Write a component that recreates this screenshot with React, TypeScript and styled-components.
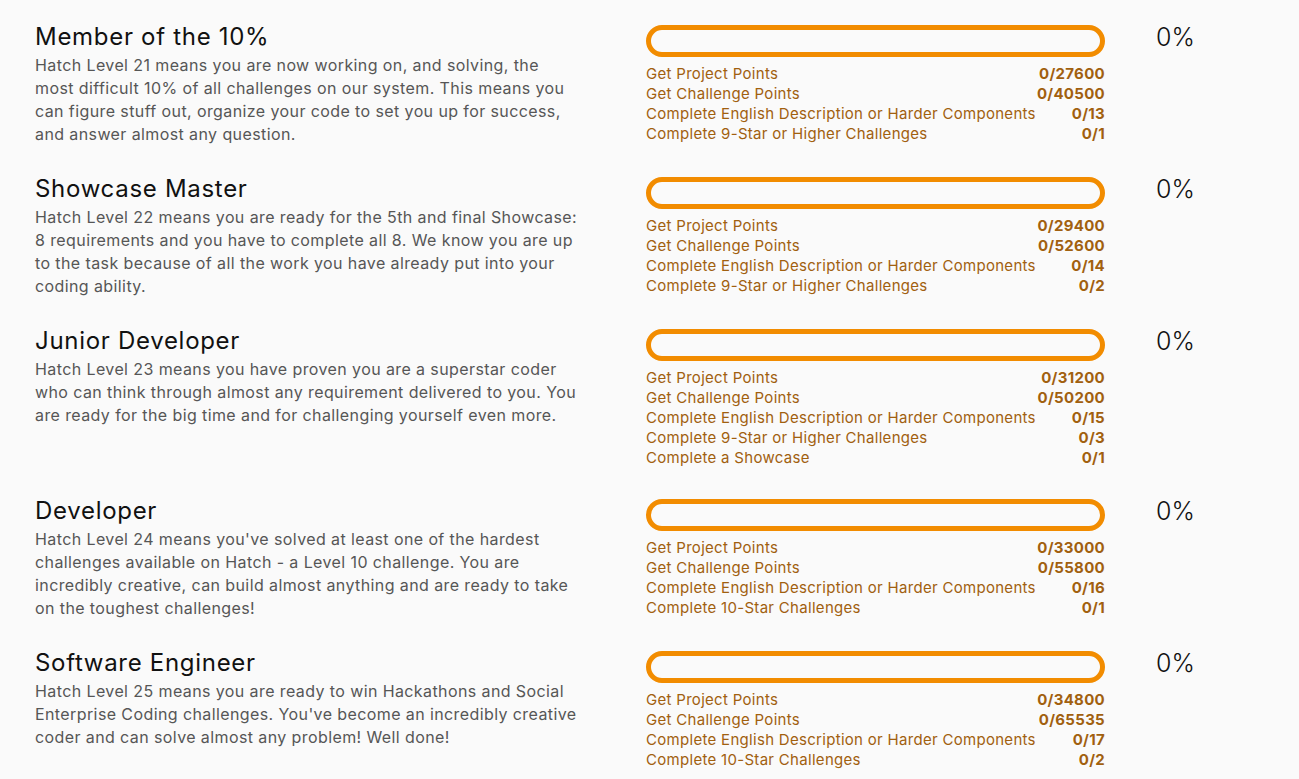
import { Fragment } from "react";
import styled, { createGlobalStyle } from "styled-components";

interface Requirement {
  label: string;
  done: number;
  total: number;
}

interface Level {
  title: string;
  lines: string[];
  requirements: Requirement[];
}

const req = (label: string, total: number): Requirement => ({
  label,
  done: 0,
  total,
});

const levels: Level[] = [
  {
    title: "Member of the 10%",
    lines: [
      "Hatch Level 21 means you are now working on, and solving, the",
      "most difficult 10% of all challenges on our system. This means you",
      "can figure stuff out, organize your code to set you up for success,",
      "and answer almost any question.",
    ],
    requirements: [
      req("Get Project Points", 27600),
      req("Get Challenge Points", 40500),
      req("Complete English Description or Harder Components", 13),
      req("Complete 9-Star or Higher Challenges", 1),
    ],
  },
  {
    title: "Showcase Master",
    lines: [
      "Hatch Level 22 means you are ready for the 5th and final Showcase:",
      "8 requirements and you have to complete all 8. We know you are up",
      "to the task because of all the work you have already put into your",
      "coding ability.",
    ],
    requirements: [
      req("Get Project Points", 29400),
      req("Get Challenge Points", 52600),
      req("Complete English Description or Harder Components", 14),
      req("Complete 9-Star or Higher Challenges", 2),
    ],
  },
  {
    title: "Junior Developer",
    lines: [
      "Hatch Level 23 means you have proven you are a superstar coder",
      "who can think through almost any requirement delivered to you. You",
      "are ready for the big time and for challenging yourself even more.",
    ],
    requirements: [
      req("Get Project Points", 31200),
      req("Get Challenge Points", 50200),
      req("Complete English Description or Harder Components", 15),
      req("Complete 9-Star or Higher Challenges", 3),
      req("Complete a Showcase", 1),
    ],
  },
  {
    title: "Developer",
    lines: [
      "Hatch Level 24 means you've solved at least one of the hardest",
      "challenges available on Hatch - a Level 10 challenge. You are",
      "incredibly creative, can build almost anything and are ready to take",
      "on the toughest challenges!",
    ],
    requirements: [
      req("Get Project Points", 33000),
      req("Get Challenge Points", 55800),
      req("Complete English Description or Harder Components", 16),
      req("Complete 10-Star Challenges", 1),
    ],
  },
  {
    title: "Software Engineer",
    lines: [
      "Hatch Level 25 means you are ready to win Hackathons and Social",
      "Enterprise Coding challenges. You've become an incredibly creative",
      "coder and can solve almost any problem! Well done!",
    ],
    requirements: [
      req("Get Project Points", 34800),
      req("Get Challenge Points", 65535),
      req("Complete English Description or Harder Components", 17),
      req("Complete 10-Star Challenges", 2),
    ],
  },
];

export default function App() {
  return (
    <>
      <GlobalStyle />
      <Page>
        {levels.map((level) => {
          const done = level.requirements.reduce((s, r) => s + r.done, 0);
          const total = level.requirements.length;
          const percent = Math.round((done / total) * 100);
          return (
            <LevelRow key={level.title}>
              <Info>
                <Title>{level.title}</Title>
                <Description>
                  {level.lines.map((line, i) => (
                    <Fragment key={i}>
                      {line}
                      {i < level.lines.length - 1 && <br />}
                    </Fragment>
                  ))}
                </Description>
              </Info>
              <Progress>
                <Bar>
                  <Fill style={{ width: `${percent}%` }} />
                </Bar>
                <ReqList>
                  {level.requirements.map((r) => (
                    <ReqRow key={r.label}>
                      <span>{r.label}</span>
                      <ReqValue>
                        {r.done}/{r.total}
                      </ReqValue>
                    </ReqRow>
                  ))}
                </ReqList>
              </Progress>
              <Percent>{percent}%</Percent>
            </LevelRow>
          );
        })}
      </Page>
    </>
  );
}

const GlobalStyle = createGlobalStyle`
  body {
    margin: 0;
    background: #fafafa;
    font-family: "Inter", "Lato", sans-serif;
  }
`;

const Page = styled.div`
  display: flex;
  flex-direction: column;
  gap: 28px;
  padding: 22px 0 0 35px;
`;

const LevelRow = styled.section`
  display: grid;
  grid-template-columns: 560px 459px auto;
  column-gap: 51px;
  align-items: start;
`;

const Info = styled.div`
  display: flex;
  flex-direction: column;
  gap: 2px;
`;

const Title = styled.h2`
  margin: 0;
  font-size: 24px;
  font-weight: 400;
  line-height: 30px;
  letter-spacing: 0.7px;
  color: #111;
`;

const Description = styled.p`
  margin: 0;
  font-size: 16px;
  line-height: 23px;
  letter-spacing: 0.4px;
  color: #565656;
  white-space: nowrap;
`;

const Progress = styled.div`
  display: flex;
  flex-direction: column;
  padding-top: 3px;
`;

const Bar = styled.div`
  box-sizing: border-box;
  height: 32px;
  border: 5px solid #f28c00;
  border-radius: 16px;
  overflow: hidden;
`;

const Fill = styled.div`
  height: 100%;
  background: #f28c00;
`;

const ReqList = styled.div`
  display: flex;
  flex-direction: column;
  margin-top: 7px;
`;

const ReqRow = styled.div`
  display: flex;
  justify-content: space-between;
  font-size: 15px;
  line-height: 20px;
  letter-spacing: 0.3px;
  color: #a1600f;
`;

const ReqValue = styled.span`
  font-weight: 700;
`;

const Percent = styled.div`
  font-size: 25px;
  font-weight: 300;
  line-height: 30px;
  color: #111;
`;
